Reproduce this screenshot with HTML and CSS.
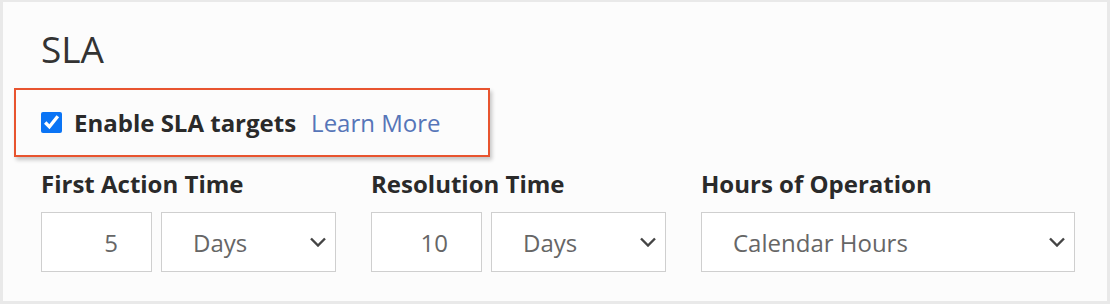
FILE: index.html
```html
<!DOCTYPE html>
<html>
<head>
<meta charset="utf-8">
<link rel="stylesheet" href="styles.css">
</head>
<body>
<div class="frame">
  <h1 class="title">SLA</h1>
  <div class="highlight">
    <label class="check">
      <input type="checkbox" checked>
      <span class="check-label">Enable SLA targets</span>
    </label>
    <a class="learn" href="#">Learn More</a>
  </div>
  <div class="fields">
    <div class="group">
      <div class="label">First Action Time</div>
      <div class="controls">
        <div class="num">5</div>
        <div class="select small"><span>Days</span><svg class="chev" viewBox="0 0 18 10"><path d="M2 1.5 L9 8.5 L16 1.5" fill="none" stroke="#444" stroke-width="2.4"/></svg></div>
      </div>
    </div>
    <div class="group">
      <div class="label">Resolution Time</div>
      <div class="controls">
        <div class="num">10</div>
        <div class="select small"><span>Days</span><svg class="chev" viewBox="0 0 18 10"><path d="M2 1.5 L9 8.5 L16 1.5" fill="none" stroke="#444" stroke-width="2.4"/></svg></div>
      </div>
    </div>
    <div class="group">
      <div class="label">Hours of Operation</div>
      <div class="controls">
        <div class="select wide"><span>Calendar Hours</span><svg class="chev" viewBox="0 0 18 10"><path d="M2 1.5 L9 8.5 L16 1.5" fill="none" stroke="#444" stroke-width="2.4"/></svg></div>
      </div>
    </div>
  </div>
</div>
</body>
</html>
```
FILE: styles.css
```css
html, body {
  margin: 0;
  padding: 0;
  background: #ffffff;
}
.frame {
  box-sizing: border-box;
  width: 1110px;
  height: 304px;
  border-style: solid;
  border-color: #e9e9e9;
  border-width: 2px 3px 3px 3px;
  background: #fcfcfc;
  padding: 22px 0 0 38px;
  font-family: "Open Sans", sans-serif;
}
.title {
  margin: 0;
  font-size: 37px;
  font-weight: 400;
  line-height: 50px;
  color: #333;
}
.highlight {
  box-sizing: border-box;
  margin: 14px 0 0 -27px;
  width: 476px;
  height: 69px;
  border: 2px solid #e8542f;
  box-shadow: 2px 3px 4px rgba(0,0,0,0.22);
  display: flex;
  align-items: center;
  padding-left: 25px;
}
.check {
  display: flex;
  align-items: center;
}
.check input {
  width: 21px;
  height: 21px;
  margin: 0 12px 0 0;
  accent-color: #0a74f5;
}
.check-label {
  font-size: 24px;
  font-weight: 700;
  color: #2a2a2a;
}
.learn {
  margin-left: 15px;
  font-size: 24px;
  color: #5675b8;
  text-decoration: none;
}
.fields {
  display: flex;
  gap: 35px;
  margin-top: 11px;
}
.label {
  font-size: 24px;
  font-weight: 700;
  color: #2a2a2a;
  line-height: 32px;
  margin-bottom: 12px;
}
.controls {
  display: flex;
  gap: 9px;
}
.num, .select {
  box-sizing: border-box;
  height: 60px;
  border: 1.5px solid #cfcfcf;
  background: #fff;
  color: #666;
  font-size: 24px;
  display: flex;
  align-items: center;
}
.num {
  width: 111px;
  justify-content: flex-end;
  padding-right: 33px;
}
.select {
  justify-content: space-between;
  padding: 0 8px 0 31px;
}
.select.small { width: 175px; }
.select.wide { width: 374px; }
.chev {
  width: 18px;
  height: 10px;
}
```
